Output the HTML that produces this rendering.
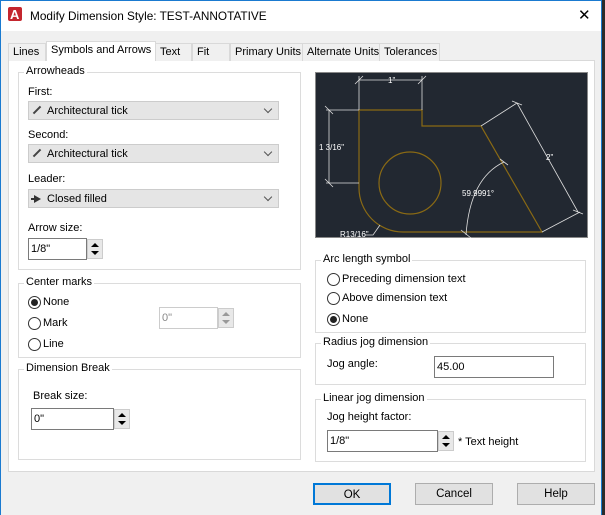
<!DOCTYPE html>
<html><head><style>
*{box-sizing:border-box;margin:0;padding:0}
body{width:605px;height:515px;background:#2b2b2b;font-family:"Liberation Sans",sans-serif;font-size:11px;color:#000;position:relative;overflow:hidden}
.a{position:absolute;white-space:nowrap}
.win{left:0;top:0;width:602px;height:515px;background:#f0f0f0;border:1px solid #1a7ad0;border-bottom:none}
.title{left:1px;top:1px;width:600px;height:30px;background:#fff}
.tab{top:43px;height:18px;border:1px solid #d9d9d9;border-bottom:none;background:#f0f0f0;padding:2px 4px 0}
.panel{left:8px;top:60px;width:587px;height:412px;background:#fff;border:1px solid #d9d9d9}
.grp{border:1px solid #dcdcdc}
.lg{background:#fff;padding:0 2px;top:-8px;left:5px;position:absolute;white-space:nowrap}
.dd{height:19px;border:1px solid #ccc;background:#e5e5e5;padding:3px 0 0 18px}
.chev{right:7px;top:4px;width:6px;height:6px;border-right:1px solid #555;border-bottom:1px solid #555;transform:rotate(45deg)}
.inp{height:22px;border:1px solid #7a7a7a;background:#fff;padding:4px 2px}
.spin{width:16px;height:20px;border:1px solid #ccc;background:#e8e8e8}
.up{left:3px;top:3px;border-left:4px solid transparent;border-right:4px solid transparent;border-bottom:4px solid #000}
.dn{left:3px;top:11px;border-left:4px solid transparent;border-right:4px solid transparent;border-top:4px solid #000}
.rad{width:13px;height:13px;border:1px solid #333;border-radius:50%;background:#fff}
.rad.on::after{content:"";position:absolute;left:2px;top:2px;width:7px;height:7px;border-radius:50%;background:#222}
.btn{top:483px;height:22px;width:78px;border:1px solid #adadad;background:#e1e1e1;text-align:center;padding-top:4px;font-size:11.5px}
</style></head><body>
<div class="a win"></div>
<div class="a title"></div>
<div class="a" style="left:8px;top:7px;width:14px;height:14px;background:#c4262e;border-radius:2px"></div>
<div class="a" style="left:10px;top:7px;color:#fff;font-weight:bold;font-size:13px">A</div>
<div class="a" style="left:30px;top:9px;font-size:11.8px">Modify Dimension Style: TEST-ANNOTATIVE</div>
<div class="a" style="left:578px;top:6px;font-size:15px">✕</div>

<div class="a panel"></div>
<div class="a tab" style="left:8px;width:38px">Lines</div>
<div class="a tab" style="left:46px;top:41px;height:20px;width:110px;background:#fff;padding-top:2px">Symbols and Arrows</div>
<div class="a tab" style="left:155px;width:37px">Text</div>
<div class="a tab" style="left:192px;width:38px">Fit</div>
<div class="a tab" style="left:230px;width:73px">Primary Units</div>
<div class="a tab" style="left:302px;width:78px">Alternate Units</div>
<div class="a tab" style="left:379px;width:61px">Tolerances</div>

<!-- Arrowheads -->
<div class="a grp" style="left:18px;top:72px;width:283px;height:198px"><span class="lg">Arrowheads</span></div>
<div class="a" style="left:28px;top:86px">First:</div>
<div class="a dd" style="left:28px;top:101px;width:251px">Architectural tick<div class="a chev"></div></div>
<div class="a" style="left:32px;top:109px;width:10px;height:2px;background:#444;transform:rotate(-45deg)"></div>
<div class="a" style="left:28px;top:129px">Second:</div>
<div class="a dd" style="left:28px;top:144px;width:251px">Architectural tick<div class="a chev"></div></div>
<div class="a" style="left:32px;top:152px;width:10px;height:2px;background:#444;transform:rotate(-45deg)"></div>
<div class="a" style="left:28px;top:173px">Leader:</div>
<div class="a dd" style="left:28px;top:189px;width:251px">Closed filled<div class="a chev"></div></div>
<div class="a" style="left:34px;top:195px;border-top:4px solid transparent;border-bottom:4px solid transparent;border-left:7px solid #333"></div>
<div class="a" style="left:31px;top:198px;width:4px;height:2px;background:#333"></div>
<div class="a" style="left:28px;top:222px">Arrow size:</div>
<div class="a inp" style="left:28px;top:238px;width:59px">1/8"</div>
<div class="a spin" style="left:87px;top:239px"><div class="a up"></div><div class="a dn"></div></div>

<!-- Center marks -->
<div class="a grp" style="left:18px;top:283px;width:283px;height:75px"><span class="lg">Center marks</span></div>
<div class="a rad on" style="left:28px;top:296px"></div><div class="a" style="left:43px;top:296px">None</div>
<div class="a rad" style="left:28px;top:317px"></div><div class="a" style="left:43px;top:317px">Mark</div>
<div class="a rad" style="left:28px;top:338px"></div><div class="a" style="left:43px;top:338px">Line</div>
<div class="a inp" style="left:159px;top:307px;width:59px;border-color:#ccc;color:#888">0"</div>
<div class="a spin" style="left:218px;top:308px"><div class="a up" style="border-bottom-color:#999"></div><div class="a dn" style="border-top-color:#999"></div></div>

<!-- Dimension break -->
<div class="a grp" style="left:18px;top:369px;width:283px;height:91px"><span class="lg">Dimension Break</span></div>
<div class="a" style="left:33px;top:390px">Break size:</div>
<div class="a inp" style="left:31px;top:408px;width:83px">0"</div>
<div class="a spin" style="left:114px;top:409px"><div class="a up"></div><div class="a dn"></div></div>

<!-- Preview -->
<div class="a" style="left:315px;top:72px;width:273px;height:166px;background:#222831;border:1px solid #888"></div>
<svg class="a" style="left:315px;top:72px" width="273" height="166" viewBox="315 72 273 166">
<g fill="none" stroke="#8a6a14" stroke-width="1.2">
<path d="M359 110 H422 V126 H481 L542 232 H403 A44 44 0 0 1 359 188 Z"/>
<circle cx="410" cy="183" r="31"/>
</g>
<g fill="none" stroke="#ddd" stroke-width="0.8">
<path d="M359 110 V76 M422 110 V76 M359 80 H422 M355 84 L363 76 M418 84 L426 76"/>
<path d="M359 110 H326 M359 183 H326 M329 110 V183 M325 106 L333 114 M325 179 L333 187"/>
<path d="M481 126 L517 103 M542 232 L580 212 M517 103 L578 212 M512 101 L522 105 M573 210 L583 214"/>
<path d="M466 235 Q470 178 504 162 M461 230 L471 238 M500 159 L508 165"/>
<path d="M365 235 H373 L380 225"/>
</g>
<g fill="#fff" font-size="8" font-family="Liberation Sans">
<text x="388" y="83">1"</text><text x="319" y="150">1 3/16"</text>
<text x="546" y="160">2"</text><text x="462" y="196">59.9991°</text><text x="340" y="237">R13/16"</text>
</g>
</svg>

<!-- Arc length -->
<div class="a grp" style="left:315px;top:260px;width:271px;height:73px"><span class="lg">Arc length symbol</span></div>
<div class="a rad" style="left:327px;top:273px"></div><div class="a" style="left:342px;top:273px">Preceding dimension text</div>
<div class="a rad" style="left:327px;top:292px"></div><div class="a" style="left:342px;top:292px">Above dimension text</div>
<div class="a rad on" style="left:327px;top:313px"></div><div class="a" style="left:342px;top:313px">None</div>

<div class="a grp" style="left:315px;top:343px;width:271px;height:42px"><span class="lg">Radius jog dimension</span></div>
<div class="a" style="left:327px;top:358px">Jog angle:</div>
<div class="a inp" style="left:434px;top:356px;width:120px">45.00</div>

<div class="a grp" style="left:315px;top:399px;width:271px;height:63px"><span class="lg">Linear jog dimension</span></div>
<div class="a" style="left:327px;top:411px">Jog height factor:</div>
<div class="a inp" style="left:327px;top:430px;width:111px">1/8"</div>
<div class="a spin" style="left:438px;top:431px"><div class="a up"></div><div class="a dn"></div></div>
<div class="a" style="left:458px;top:436px">* Text height</div>

<div class="a btn" style="left:313px;border:2px solid #0078d7">OK</div>
<div class="a btn" style="left:415px">Cancel</div>
<div class="a btn" style="left:517px">Help</div>
</body></html>
